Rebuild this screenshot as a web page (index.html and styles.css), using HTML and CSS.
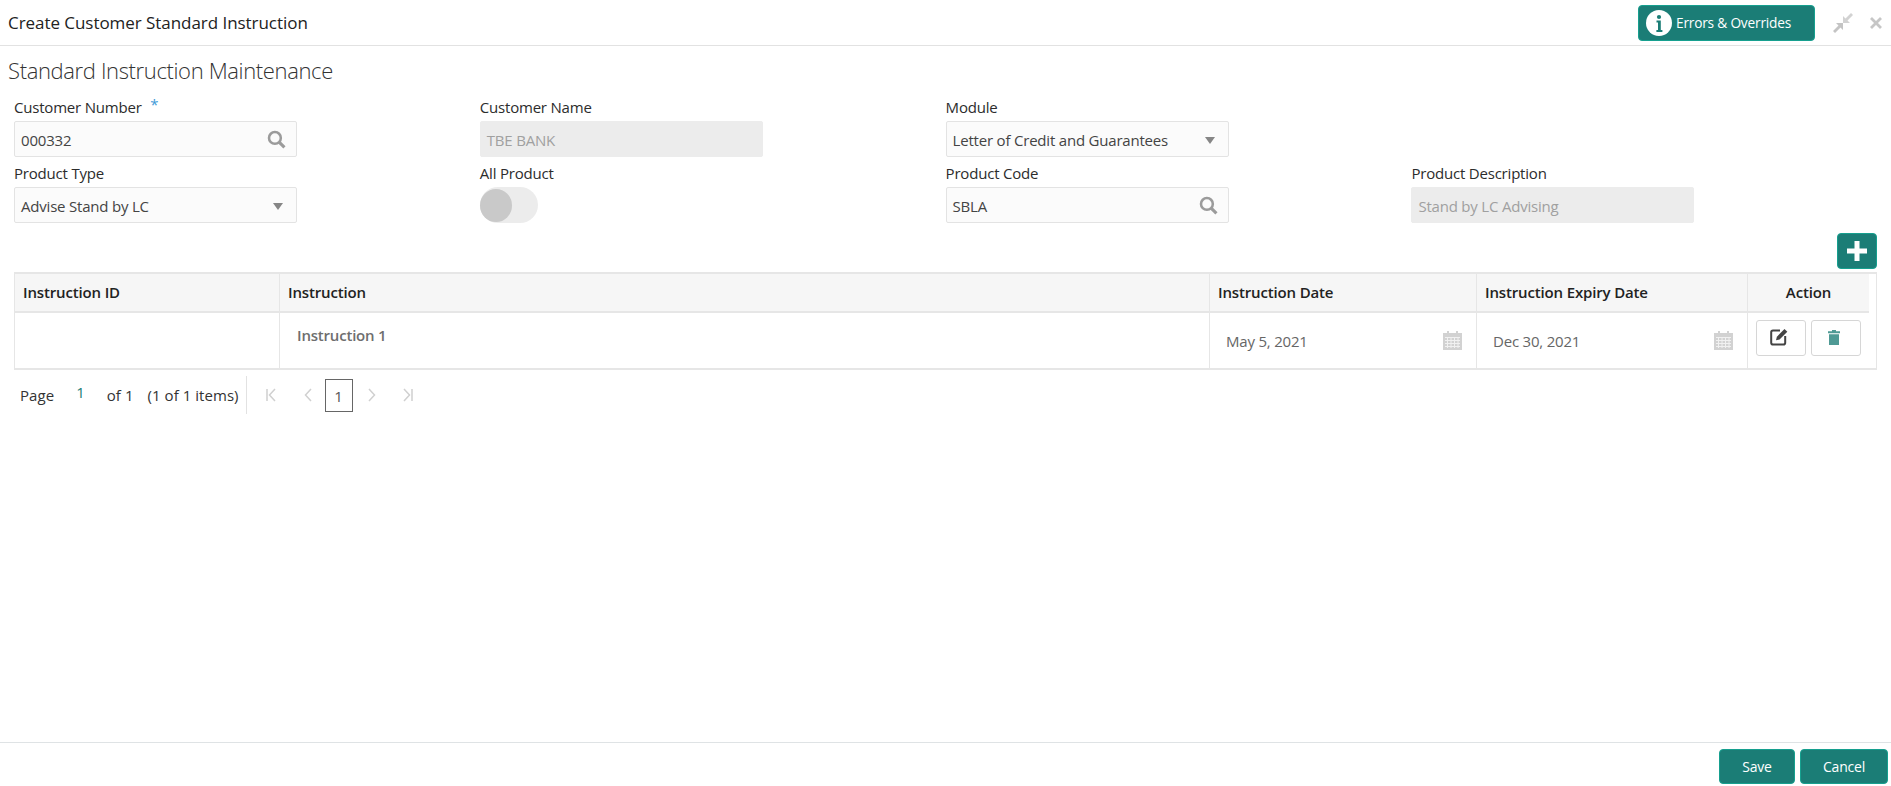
FILE: index.html
```html
<!DOCTYPE html>
<html>
<head>
  <meta charset="UTF-8" />
  <title>Create Customer Standard Instruction</title>
  <link rel="stylesheet" href="styles.css">
</head>
<body>
  <div class="screen">
    <header class="top-bar">
      <span class="top-title">Create Customer Standard Instruction</span>
      <button class="errors-btn">
        <svg class="info-icon" viewBox="0 0 26 26" width="26" height="26">
          <circle cx="13" cy="13" r="13" fill="#fff"/>
          <circle cx="13" cy="7" r="2.1" fill="#1b7d76"/>
          <path d="M10.5 10.6h4.3v9.4h1.6v2h-6v-2h1.6v-7.4h-1.5z" fill="#1b7d76"/>
        </svg>
        <span>Errors &amp; Overrides</span>
      </button>
      <svg class="win-icon" viewBox="0 0 20 20" width="20" height="20">
        <path d="M18 0l2 2-5.500 5.500 2.500 2.500h-7V3l2.500 2.500z" fill="#d2d2d2"/>
        <path d="M2 20l-2-2 5.500-5.500L3 10h7v7l-2.500-2.500z" fill="#c4c4c4"/>
      </svg>
      <svg class="win-icon close-icon" viewBox="0 0 14 14" width="14" height="14">
        <path d="M2 2l10 10M12 2L2 12" stroke="#c6c6c6" stroke-width="2.800" fill="none"/>
      </svg>
    </header>

    <main class="content">
      <h1 class="section-title">Standard Instruction Maintenance</h1>

      <div class="form-grid">
        <div class="field">
          <label>Customer Number <sup class="req">*</sup></label>
          <div class="input">
            <span>000332</span>
            <svg class="search-icon" viewBox="0 0 18 18" width="19" height="19">
              <circle cx="7.500" cy="7.500" r="5.600" fill="none" stroke="#9b9b9b" stroke-width="2.400"/>
              <path d="M11.500 11.500l5 5" stroke="#9b9b9b" stroke-width="3"/>
            </svg>
          </div>
        </div>
        <div class="field">
          <label>Customer Name</label>
          <div class="input disabled"><span>TBE BANK</span></div>
        </div>
        <div class="field">
          <label>Module</label>
          <div class="input select">
            <span>Letter of Credit and Guarantees</span>
            <i class="caret"></i>
          </div>
        </div>
        <div class="field"></div>

        <div class="field">
          <label>Product Type</label>
          <div class="input select">
            <span>Advise Stand by LC</span>
            <i class="caret"></i>
          </div>
        </div>
        <div class="field">
          <label>All Product</label>
          <div class="toggle"><i class="knob"></i></div>
        </div>
        <div class="field">
          <label>Product Code</label>
          <div class="input">
            <span>SBLA</span>
            <svg class="search-icon" viewBox="0 0 18 18" width="19" height="19">
              <circle cx="7.500" cy="7.500" r="5.600" fill="none" stroke="#9b9b9b" stroke-width="2.400"/>
              <path d="M11.500 11.500l5 5" stroke="#9b9b9b" stroke-width="3"/>
            </svg>
          </div>
        </div>
        <div class="field">
          <label>Product Description</label>
          <div class="input disabled"><span>Stand by LC Advising</span></div>
        </div>
      </div>

      <div class="add-row">
        <button class="add-btn">
          <svg viewBox="0 0 22 22" width="22" height="22">
            <path d="M8.500 1h5v7.500H21v5h-7.500V21h-5v-7.500H1v-5h7.500z" fill="#fff"/>
          </svg>
        </button>
      </div>

      <div class="grid">
        <div class="grid-row grid-head">
          <div class="cell">Instruction ID</div>
          <div class="cell">Instruction</div>
          <div class="cell">Instruction Date</div>
          <div class="cell">Instruction Expiry Date</div>
          <div class="cell cell-action">Action</div>
        </div>
        <div class="grid-row grid-body">
          <div class="cell"></div>
          <div class="cell cell-name">Instruction 1</div>
          <div class="cell cell-date">
            <span>May 5, 2021</span>
            <svg class="cal-icon" viewBox="0 0 19 19" width="19" height="19">
              <path d="M4 0h2v3H4zM13 0h2v3h-2zM0 2h19v17H0z" fill="#d2d2d2"/>
              <path d="M2 6.500h15M2 9.500h15M2 12.500h15M2 15.500h15M4.500 6v11M8 6v11M11.500 6v11M15 6v11" stroke="#f1f1f1" stroke-width="1"/>
            </svg>
          </div>
          <div class="cell cell-date">
            <span>Dec 30, 2021</span>
            <svg class="cal-icon" viewBox="0 0 19 19" width="19" height="19">
              <path d="M4 0h2v3H4zM13 0h2v3h-2zM0 2h19v17H0z" fill="#d2d2d2"/>
              <path d="M2 6.500h15M2 9.500h15M2 12.500h15M2 15.500h15M4.500 6v11M8 6v11M11.500 6v11M15 6v11" stroke="#f1f1f1" stroke-width="1"/>
            </svg>
          </div>
          <div class="cell cell-buttons">
            <button class="icon-btn">
              <svg viewBox="0 0 18 18" width="18" height="18">
                <path d="M10 2.500H3A1.800 1.800 0 0 0 1.200 4.300v10.400A1.800 1.800 0 0 0 3 16.500h10.400a1.800 1.800 0 0 0 1.800-1.800V8" fill="none" stroke="#444" stroke-width="2"/>
                <path d="M6 12.300l.9-3.600L14.500.9l2.800 2.800-7.700 7.800z" fill="#444"/>
              </svg>
            </button>
            <button class="icon-btn">
              <svg viewBox="0 0 12 15" width="12" height="15">
                <path d="M4 0h4v1.200h4V3.200H0V1.200h4zM1 4.200h10V15H1z" fill="#4f9a95"/>
              </svg>
            </button>
          </div>
        </div>
      </div>

      <div class="pager">
        <span class="pager-text">Page</span>
        <span class="pager-current">1</span>
        <span class="pager-text">of 1</span>
        <span class="pager-text pager-items">(1 of 1 items)</span>
        <i class="pager-sep"></i>
        <svg class="pager-icon" viewBox="0 0 10 14" width="10" height="14">
          <path d="M1 1v12M9 1L3.500 7 9 13" stroke="#d0d0d0" stroke-width="1.500" fill="none"/>
        </svg>
        <svg class="pager-icon pager-prev" viewBox="0 0 10 14" width="10" height="14">
          <path d="M8 1L2.500 7 8 13" stroke="#d0d0d0" stroke-width="1.500" fill="none"/>
        </svg>
        <span class="pager-page">1</span>
        <svg class="pager-icon pager-next" viewBox="0 0 10 14" width="10" height="14">
          <path d="M2 1l5.500 6L2 13" stroke="#d0d0d0" stroke-width="1.500" fill="none"/>
        </svg>
        <svg class="pager-icon pager-last" viewBox="0 0 10 14" width="10" height="14">
          <path d="M9 1v12M1 1l5.500 6L1 13" stroke="#d0d0d0" stroke-width="1.500" fill="none"/>
        </svg>
      </div>
    </main>

    <footer class="bottom-bar">
      <button class="teal-btn save-btn">Save</button>
      <button class="teal-btn cancel-btn">Cancel</button>
    </footer>
  </div>
</body>
</html>
```

FILE: styles.css
```css
html, body {
  margin: 0;
  height: 100%;
  background: #fff;
}
body {
  font-family: "Open Sans", "Noto Sans", sans-serif;
  font-size: 15px;
  letter-spacing: -0.2px;
  color: #2c2c2c;
  overflow: hidden;
}
button {
  font-family: inherit;
  letter-spacing: inherit;
  cursor: pointer;
}
.screen {
  height: 786px;
  display: flex;
  flex-direction: column;
}

/* top bar */
.top-bar {
  height: 45px;
  flex: 0 0 auto;
  display: flex;
  align-items: center;
  padding-left: 8px;
  border-bottom: 1px solid #e2e2e2;
}
.top-title {
  flex: 1;
  font-size: 17px;
  letter-spacing: -0.05px;
  color: #222;
}
.errors-btn {
  width: 177px;
  height: 36px;
  display: flex;
  align-items: center;
  gap: 4px;
  padding: 0 0 0 7px;
  background: #1b7d76;
  border: 1px solid #16a08f;
  border-radius: 4px;
  color: #fff;
  font-size: 13.700px;
}
.win-icon {
  margin-left: 18px;
}
.close-icon {
  margin-left: 16px;
  margin-right: 8px;
}

/* form */
.content {
  flex: 1;
  padding: 0 14px;
}
.section-title {
  margin: 0 0 0 -6px;
  padding-top: 9px;
  height: 40px;
  font-size: 22px;
  letter-spacing: -0.36px;
  line-height: 30px;
  font-weight: 300;
  color: #333;
  box-sizing: border-box;
}
.form-grid {
  display: grid;
  grid-template-columns: repeat(4, 283px);
  column-gap: 182.800px;
  row-gap: 5px;
  padding-top: 10px;
}
.field label {
  display: block;
  height: 22px;
  line-height: 22px;
  margin-bottom: 3px;
  font-size: 15px;
  color: #2c2c2c;
}
.req {
  color: #3f9bd8;
  font-size: 15px;
  line-height: 0;
  margin-left: 5px;
  vertical-align: 3px;
}
.input {
  height: 36px;
  box-sizing: border-box;
  display: flex;
  align-items: center;
  justify-content: space-between;
  padding: 1px 10px 0 6px;
  background: #fbfbfb;
  border: 1px solid #e3e3e3;
  border-radius: 2px;
  font-size: 15px;
  color: #444;
}
.input.select {
  padding-top: 2px;
  padding-right: 12px;
}
.input.disabled {
  background: #ececec;
  border-color: #ececec;
  color: #a0a0a0;
}
.caret {
  width: 0;
  height: 0;
  border-left: 5.500px solid transparent;
  border-right: 5.500px solid transparent;
  border-top: 7px solid #868686;
  margin-right: 1px;
}
.toggle {
  width: 58px;
  height: 36px;
  display: flex;
  align-items: center;
  border-radius: 18px;
  background: #ececec;
}
.knob {
  display: block;
  width: 32px;
  height: 33px;
  border-radius: 50%;
  background: #c9c9c9;
}

/* add button */
.add-row {
  display: flex;
  justify-content: flex-end;
  padding-top: 10px;
  height: 49px;
  box-sizing: border-box;
}
.add-btn {
  width: 40px;
  height: 36px;
  padding: 0;
  display: flex;
  align-items: center;
  justify-content: center;
  background: #1b7d76;
  border: 1px solid #16a08f;
  border-radius: 4px;
}

/* grid */
.grid {
  border: 2px solid #e6e6e6;
  border-width: 2px 1px 2px 1px;
}
.grid-row {
  display: grid;
  grid-template-columns: 265px 930px 267px 271px 121px;
}
.cell {
  box-sizing: border-box;
  border-right: 1px solid #e6e6e6;
  padding-left: 8px;
}
.grid-head {
  height: 39px;
  line-height: 37px;
  font-weight: 600;
  font-size: 15px;
  letter-spacing: -0.15px;
  color: #222;
  border-bottom: 2px solid #e6e6e6;
  width: 1854px;
  background: #f6f6f6;
  box-sizing: border-box;
}
.cell-action {
  text-align: center;
  border-right: 0;
  padding-left: 0;
}
.grid-body {
  height: 55px;
}
.cell-name {
  padding-left: 17px;
  padding-top: 12px;
  font-weight: 600;
  font-size: 15px;
  color: #6e6e6e;
}
.cell-date {
  display: flex;
  align-items: center;
  justify-content: space-between;
  padding: 0 14px 0 16px;
  color: #666;
}
.cell-buttons {
  display: flex;
  gap: 5px;
  padding: 7px 0 0 8px;
  border-right: 0;
}
.icon-btn {
  width: 50px;
  height: 36px;
  padding: 0 5px 2px 0;
  display: flex;
  align-items: center;
  justify-content: center;
  background: #fff;
  border: 1px solid #d6d6d6;
  border-radius: 3px;
}

/* pager */
.pager {
  display: flex;
  align-items: center;
  height: 38px;
  margin-top: 6px;
  padding-left: 6px;
  color: #333;
  font-size: 15px;
  letter-spacing: 0.05px;
}
.pager-current {
  margin: 0 22px 6px;
  color: #1b7d76;
}
.pager-items {
  margin-left: 14px;
}
.pager-sep {
  width: 1px;
  height: 38px;
  background: #e2e2e2;
  margin: 0 19px 0 7px;
}
.pager-prev {
  margin-left: 27px;
}
.pager-page {
  width: 28px;
  height: 33px;
  box-sizing: border-box;
  margin-left: 12px;
  border: 1px solid #666;
  text-align: center;
  line-height: 33px;
  color: #555;
}
.pager-next {
  margin-left: 14px;
}
.pager-last {
  margin-left: 26px;
}

/* footer */
.bottom-bar {
  height: 44px;
  flex: 0 0 auto;
  box-sizing: border-box;
  display: flex;
  justify-content: flex-end;
  gap: 5px;
  padding: 6px 3px 0 0;
  border-top: 1px solid #dfe3e5;
}
.teal-btn {
  height: 35px;
  background: #1b7d76;
  border: 1px solid #16a08f;
  border-radius: 4px;
  color: #fff;
  font-size: 14px;
  padding: 0;
}
.save-btn {
  width: 76px;
}
.cancel-btn {
  width: 88px;
}
```
